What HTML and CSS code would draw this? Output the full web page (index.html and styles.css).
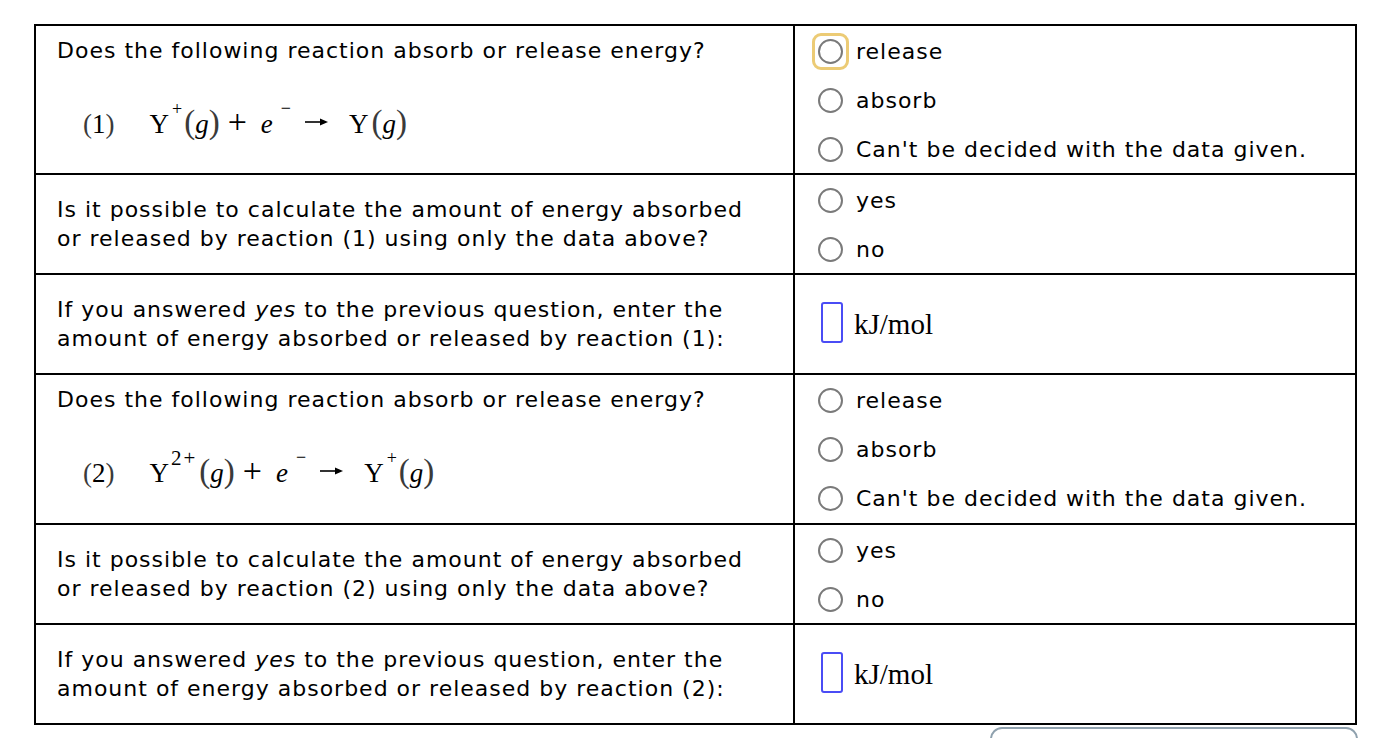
FILE: index.html
```html
<!DOCTYPE html>
<html>
<head>
<meta charset="utf-8">
<link rel="stylesheet" href="styles.css">
</head>
<body>
<div class="sheet">
  <div class="q q-top">
    <div class="qtext">Does the following reaction absorb or release energy?</div>
    <div class="eq">
      <span class="num"><span class="p">(</span>1<span class="p">)</span></span>
      <span class="sym">Y</span><sup class="sup plus1">+</sup><span class="p lp">(</span><i class="g">g</i><span class="p">)</span>
      <span class="op">+</span>
      <i class="e">e</i><sup class="sup minus">−</sup>
      <svg class="arrow" width="24" height="10" viewBox="0 0 24 10"><line x1="0" y1="5" x2="17" y2="5" stroke="#000" stroke-width="1.6"/><path d="M15 1.5 L23 5 L15 8.5 Z" fill="#000"/></svg>
      <span class="sym">Y</span><span class="p lp2">(</span><i class="g">g</i><span class="p">)</span>
    </div>
  </div>
  <div class="a">
    <label class="opt"><span class="radio focus"></span>release</label>
    <label class="opt"><span class="radio"></span>absorb</label>
    <label class="opt"><span class="radio"></span>Can't be decided with the data given.</label>
  </div>

  <div class="q q-mid">
    <div class="qtext">Is it possible to calculate the amount of energy absorbed<br>or released by reaction (1) using only the data above?</div>
  </div>
  <div class="a">
    <label class="opt"><span class="radio"></span>yes</label>
    <label class="opt"><span class="radio"></span>no</label>
  </div>

  <div class="q q-mid">
    <div class="qtext">If you answered <i>yes</i> to the previous question, enter the<br>amount of energy absorbed or released by reaction (1):</div>
  </div>
  <div class="a a-input">
    <span class="box"></span><span class="unit">kJ/mol</span>
  </div>

  <div class="q q-top">
    <div class="qtext">Does the following reaction absorb or release energy?</div>
    <div class="eq">
      <span class="num"><span class="p">(</span>2<span class="p">)</span></span>
      <span class="sym">Y</span><sup class="sup plus2">2+</sup><span class="p lp">(</span><i class="g">g</i><span class="p">)</span>
      <span class="op">+</span>
      <i class="e">e</i><sup class="sup minus">−</sup>
      <svg class="arrow" width="24" height="10" viewBox="0 0 24 10"><line x1="0" y1="5" x2="17" y2="5" stroke="#000" stroke-width="1.6"/><path d="M15 1.5 L23 5 L15 8.5 Z" fill="#000"/></svg>
      <span class="sym">Y</span><sup class="sup plus1">+</sup><span class="p lp">(</span><i class="g">g</i><span class="p">)</span>
    </div>
  </div>
  <div class="a">
    <label class="opt"><span class="radio"></span>release</label>
    <label class="opt"><span class="radio"></span>absorb</label>
    <label class="opt"><span class="radio"></span>Can't be decided with the data given.</label>
  </div>

  <div class="q q-mid">
    <div class="qtext">Is it possible to calculate the amount of energy absorbed<br>or released by reaction (2) using only the data above?</div>
  </div>
  <div class="a">
    <label class="opt"><span class="radio"></span>yes</label>
    <label class="opt"><span class="radio"></span>no</label>
  </div>

  <div class="q q-mid last">
    <div class="qtext">If you answered <i>yes</i> to the previous question, enter the<br>amount of energy absorbed or released by reaction (2):</div>
  </div>
  <div class="a a-input last">
    <span class="box"></span><span class="unit">kJ/mol</span>
  </div>
</div>
<div class="footer">
  <div class="panel"></div>
</div>
</body>
</html>
```

FILE: styles.css
```css
html, body {
  margin: 0;
  padding: 0;
  background: #fff;
}
body {
  font-family: "DejaVu Sans", Verdana, sans-serif;
  font-size: 22px;
  letter-spacing: 1px;
  color: #000;
  width: 1380px;
  height: 738px;
  overflow: hidden;
}
.sheet {
  margin: 24px 0 0 34px;
  width: 1323px;
  box-sizing: border-box;
  border: 2px solid #000;
  display: grid;
  grid-template-columns: 759px 1fr;
  grid-template-rows: 149px 100px 100px 150px 100px 98px;
}
.q, .a {
  box-sizing: border-box;
  border-bottom: 2px solid #000;
}
.q.last, .a.last {
  border-bottom: none;
}
.q {
  border-right: 2px solid #000;
  padding-left: 21px;
  display: flex;
  flex-direction: column;
}
.q-top {
  padding-top: 10px;
}
.q-mid {
  justify-content: center;
}
.qtext {
  line-height: 29px;
}
.eq {
  margin-top: 37px;
  margin-left: 26px;
  font-family: "Liberation Serif", "Times New Roman", serif;
  font-size: 27px;
  letter-spacing: 0;
  line-height: 40px;
  height: 40px;
  display: flex;
  align-items: baseline;
  white-space: nowrap;
}
.eq i {
  font-style: italic;
}
.num {
  margin-right: 35px;
}
.p {
  color: #3a3a3a;
  font-size: 33px;
  line-height: 40px;
}
.num .p {
  font-size: 27px;
}
.sup {
  font-size: 18px;
  position: relative;
  top: -18px;
  line-height: 1;
  vertical-align: baseline;
}
.plus1 {
  margin-left: 3px;
}
.plus2 {
  margin-left: 2px;
  font-size: 21px;
  letter-spacing: 2px;
  top: -17px;
}
.lp {
  margin-left: 2px;
}
.lp2 {
  margin-left: 3px;
}
.op {
  font-size: 34px;
  line-height: 40px;
  margin: 0 14px 0 8px;
}
.minus {
  margin-left: 8px;
  top: -19px;
}
.arrow {
  margin: 0 20px 0 14px;
  align-self: center;
}
.a {
  display: flex;
  flex-direction: column;
  justify-content: center;
  padding-left: 23px;
}
.opt {
  display: flex;
  align-items: center;
  height: 50px;
  line-height: 29px;
  padding-top: 1px;
  box-sizing: border-box;
}
.radio {
  position: relative;
  width: 21px;
  height: 21px;
  border: 2px solid #7a7a7a;
  border-radius: 50%;
  margin-right: 13px;
  flex: none;
}
.radio.focus::before {
  content: "";
  position: absolute;
  left: -8px;
  top: -8px;
  width: 31px;
  height: 31px;
  border: 3px solid #eccb75;
  border-radius: 9px;
}
.a-input {
  flex-direction: row;
  align-items: center;
  justify-content: flex-start;
  padding-left: 26px;
}
.box {
  width: 18px;
  height: 37px;
  border: 2px solid #4a4cf5;
  border-radius: 3px;
  margin-right: 11px;
  margin-top: -4px;
}
.unit {
  font-family: "Liberation Serif", "Times New Roman", serif;
  font-size: 29px;
  letter-spacing: 0;
}
.footer {
  display: flex;
  justify-content: flex-end;
  width: 1358px;
  margin-top: 2px;
}
.panel {
  width: 368px;
  height: 30px;
  box-sizing: border-box;
  border: 2px solid #8fa1ae;
  border-radius: 12px;
  background: #fff;
}
```
